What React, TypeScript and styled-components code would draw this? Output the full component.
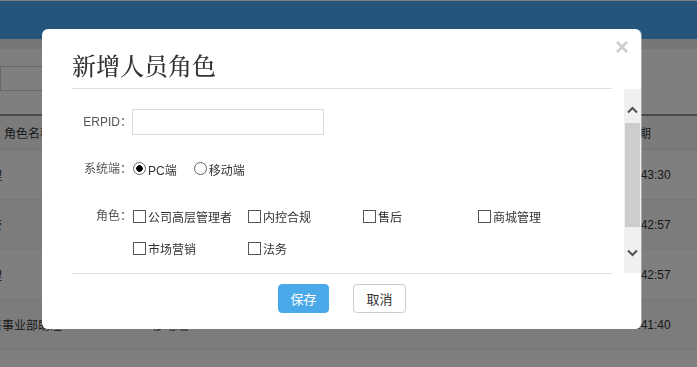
import React from 'react';
import styled, { createGlobalStyle } from 'styled-components';

const GlobalStyle = createGlobalStyle`
  html, body {
    margin: 0;
    padding: 0;
    background: #fff;
    font-family: "Liberation Sans", "Noto Sans CJK SC", sans-serif;
    font-size: 12px;
    color: #333;
    overflow: hidden;
  }
`;

/* ---------- page behind the dialog ---------- */

const Page = styled.div`
  height: 100vh;
  overflow: hidden;
  background: #fff;
`;

const TopBar = styled.header`
  height: 38px;
  border-top: 1px solid #fff;
  background: #4aaaf4;
`;

const TabStrip = styled.div`
  height: 10px;
  background: #eee;
`;

const SearchBar = styled.div`
  height: 65px;
  padding-top: 17px;
  box-sizing: border-box;
`;

const SearchInput = styled.div`
  width: 160px;
  height: 25px;
  box-sizing: border-box;
  border: 1px solid #ccc;
`;

const TableScroll = styled.div`
  overflow: hidden;
  border-top: 2px solid #949494;
`;

const Grid = styled.div`
  margin-left: -30px;
  display: grid;
  grid-template-columns: 140px 120px 1fr 164px;
`;

const HeadCell = styled.div<{ $align?: string; $pad?: number }>`
  height: 34px;
  box-sizing: border-box;
  display: flex;
  align-items: center;
  justify-content: ${({ $align }) => $align || 'center'};
  padding-left: ${({ $pad }) => $pad || 0}px;
  background: #f6f6f6;
  border-bottom: 1px solid #e6e6e6;
  white-space: nowrap;
`;

const Cell = styled.div<{ $align?: string; $pad?: number; $odd?: boolean }>`
  height: 50px;
  box-sizing: border-box;
  display: flex;
  align-items: center;
  justify-content: ${({ $align }) => $align || 'center'};
  padding-left: ${({ $pad }) => $pad || 0}px;
  background: ${({ $odd }) => ($odd ? '#fff' : '#f9f9f9')};
  border-bottom: 1px solid #eee;
  white-space: nowrap;
`;

const rows = [
  ['经理', 'PC端', '2018-06-21 10:43:30'],
  ['主管', 'PC端', '2018-06-21 10:42:57'],
  ['助理', '移动端', '2018-06-21 10:42:57'],
  ['销售事业部助理', '移动端', '2018-06-20 17:41:40'],
];

/* ---------- dialog ---------- */

const Backdrop = styled.div`
  position: fixed;
  inset: 0;
  background: rgba(0, 0, 0, 0.5);
`;

const Modal = styled.div`
  position: fixed;
  left: 42px;
  top: 29px;
  width: 599px;
  height: 300px;
  background: #fff;
  border-radius: 6px;
  box-shadow: 1px 0 0 rgba(255, 255, 255, 0.35);
  display: flex;
  flex-direction: column;
  overflow: hidden;
`;

const ModalHeader = styled.div`
  margin: 0 29px 0 30px;
  padding: 23px 0 10px;
  border-bottom: 1px solid #e0e0e0;
`;

const Title = styled.h4`
  margin: 0;
  font-family: "Noto Serif CJK SC", "Noto Sans CJK SC", serif;
  font-size: 24px;
  line-height: 26px;
  font-weight: 500;
  color: #333;
`;

const CloseButton = styled.button`
  position: absolute;
  top: 6px;
  right: 12px;
  padding: 0;
  border: 0;
  background: none;
  font-family: "Liberation Sans", sans-serif;
  font-size: 24px;
  font-weight: bold;
  line-height: 1;
  color: #000;
  opacity: 0.2;
  cursor: pointer;
`;

const ModalBody = styled.div`
  height: 184px;
  display: flex;
`;

const FormArea = styled.div`
  flex: 1;
  overflow: hidden;
  padding: 20px 30px 0;
  display: flex;
  flex-direction: column;
  gap: 21px;
`;

const FormRow = styled.div`
  display: flex;
  align-items: flex-start;
`;

const Label = styled.label`
  width: 60px;
  flex: none;
  height: 26px;
  line-height: 26px;
  text-align: right;
  color: #555;
  white-space: nowrap;
`;

const TextInput = styled.input`
  width: 192px;
  height: 26px;
  box-sizing: border-box;
  border: 1px solid #dadada;
  padding: 0 6px;
  outline: none;
  font: inherit;
`;

const OptionLine = styled.div`
  height: 26px;
  display: flex;
  align-items: center;
`;

const Option = styled.label`
  display: flex;
  align-items: center;
  margin-right: 16px;
  color: #333;
  white-space: nowrap;
`;

const Radio = styled.input.attrs({ type: 'radio' })`
  appearance: none;
  width: 13px;
  height: 13px;
  margin: 0 2px 2px 1px;
  box-sizing: border-box;
  border: 1px solid #666;
  border-radius: 50%;
  background: #fff;
  &:checked {
    background: radial-gradient(circle, #000 0 3px, #fff 3.6px);
  }
`;

const CheckGrid = styled.div`
  display: grid;
  grid-template-columns: repeat(4, 115px);
  grid-auto-rows: 26px;
  row-gap: 6px;
`;

const CheckOption = styled.label`
  display: flex;
  align-items: center;
  color: #333;
  white-space: nowrap;
`;

const Checkbox = styled.input.attrs({ type: 'checkbox' })`
  appearance: none;
  width: 13px;
  height: 13px;
  margin: 0 2px 0 1px;
  box-sizing: border-box;
  border: 1px solid #555;
  background: #fff;
`;

const ScrollTrack = styled.div`
  width: 17px;
  flex: none;
  background: #f0f0f0;
  display: flex;
  flex-direction: column;
`;

const ScrollArrow = styled.div<{ $down?: boolean }>`
  height: 34px;
  display: flex;
  justify-content: center;
  align-items: ${({ $down }) => ($down ? 'flex-end' : 'flex-start')};
  padding: ${({ $down }) => ($down ? '0 0 16px' : '17px 0 0')};
  box-sizing: border-box;
`;

const ScrollThumb = styled.div`
  height: 104px;
  margin: 0 1px;
  background: #cdcdcd;
`;

const ScrollGap = styled.div`
  flex: 1;
`;

const ModalFooter = styled.div`
  margin: 0 29px 0 30px;
  padding: 10px 0 16px;
  border-top: 1px solid #e0e0e0;
  display: flex;
  justify-content: center;
  gap: 24px;
`;

const Button = styled.button<{ $primary?: boolean }>`
  height: 29px;
  padding: ${({ $primary }) => ($primary ? '0 11px' : '0 12px 0 13px')};
  border-radius: 4px;
  border: 1px solid ${({ $primary }) => ($primary ? '#4aa9e9' : '#ccc')};
  background: ${({ $primary }) => ($primary ? '#4aa9e9' : '#fff')};
  color: ${({ $primary }) => ($primary ? '#fff' : '#333')};
  font-family: "Liberation Sans", "Noto Sans CJK SC", sans-serif;
  font-size: 13px;
  cursor: pointer;
`;

function Chevron({ down }: { down?: boolean }) {
  return (
    <svg width="11" height="8" viewBox="0 0 11 8">
      <path
        d={down ? 'M1 1.5 L5.5 6 L10 1.5' : 'M1 6.5 L5.5 2 L10 6.5'}
        fill="none"
        stroke="#505050"
        strokeWidth="2"
      />
    </svg>
  );
}

const roles = ['公司高层管理者', '内控合规', '售后', '商城管理', '市场营销', '法务'];

export default function App() {
  return (
    <>
      <GlobalStyle />
      <Page>
        <TopBar />
        <TabStrip />
        <SearchBar>
          <SearchInput />
        </SearchBar>
        <TableScroll>
          <Grid>
            <HeadCell $align="flex-start" $pad={34}>角色名称</HeadCell>
            <HeadCell>系统端</HeadCell>
            <HeadCell>描述</HeadCell>
            <HeadCell>最后更新日期</HeadCell>
            {rows.map((r, i) => (
              <React.Fragment key={i}>
                <Cell $align="flex-start" $pad={8} $odd={i % 2 === 0}>{r[0]}</Cell>
                <Cell $odd={i % 2 === 0}>{r[1]}</Cell>
                <Cell $odd={i % 2 === 0} />
                <Cell $odd={i % 2 === 0}>{r[2]}</Cell>
              </React.Fragment>
            ))}
          </Grid>
        </TableScroll>
      </Page>

      <Backdrop />
      <Modal>
        <ModalHeader>
          <Title>新增人员角色</Title>
        </ModalHeader>
        <CloseButton>×</CloseButton>
        <ModalBody>
          <FormArea>
            <FormRow>
              <Label>ERPID：</Label>
              <TextInput />
            </FormRow>
            <FormRow>
              <Label>系统端：</Label>
              <OptionLine>
                <Option>
                  <Radio name="client" defaultChecked />
                  PC端
                </Option>
                <Option>
                  <Radio name="client" />
                  移动端
                </Option>
              </OptionLine>
            </FormRow>
            <FormRow>
              <Label>角色：</Label>
              <CheckGrid>
                {roles.map((role) => (
                  <CheckOption key={role}>
                    <Checkbox />
                    {role}
                  </CheckOption>
                ))}
              </CheckGrid>
            </FormRow>
          </FormArea>
          <ScrollTrack>
            <ScrollArrow>
              <Chevron />
            </ScrollArrow>
            <ScrollThumb />
            <ScrollGap />
            <ScrollArrow $down>
              <Chevron down />
            </ScrollArrow>
          </ScrollTrack>
        </ModalBody>
        <ModalFooter>
          <Button $primary>保存</Button>
          <Button>取消</Button>
        </ModalFooter>
      </Modal>
    </>
  );
}
